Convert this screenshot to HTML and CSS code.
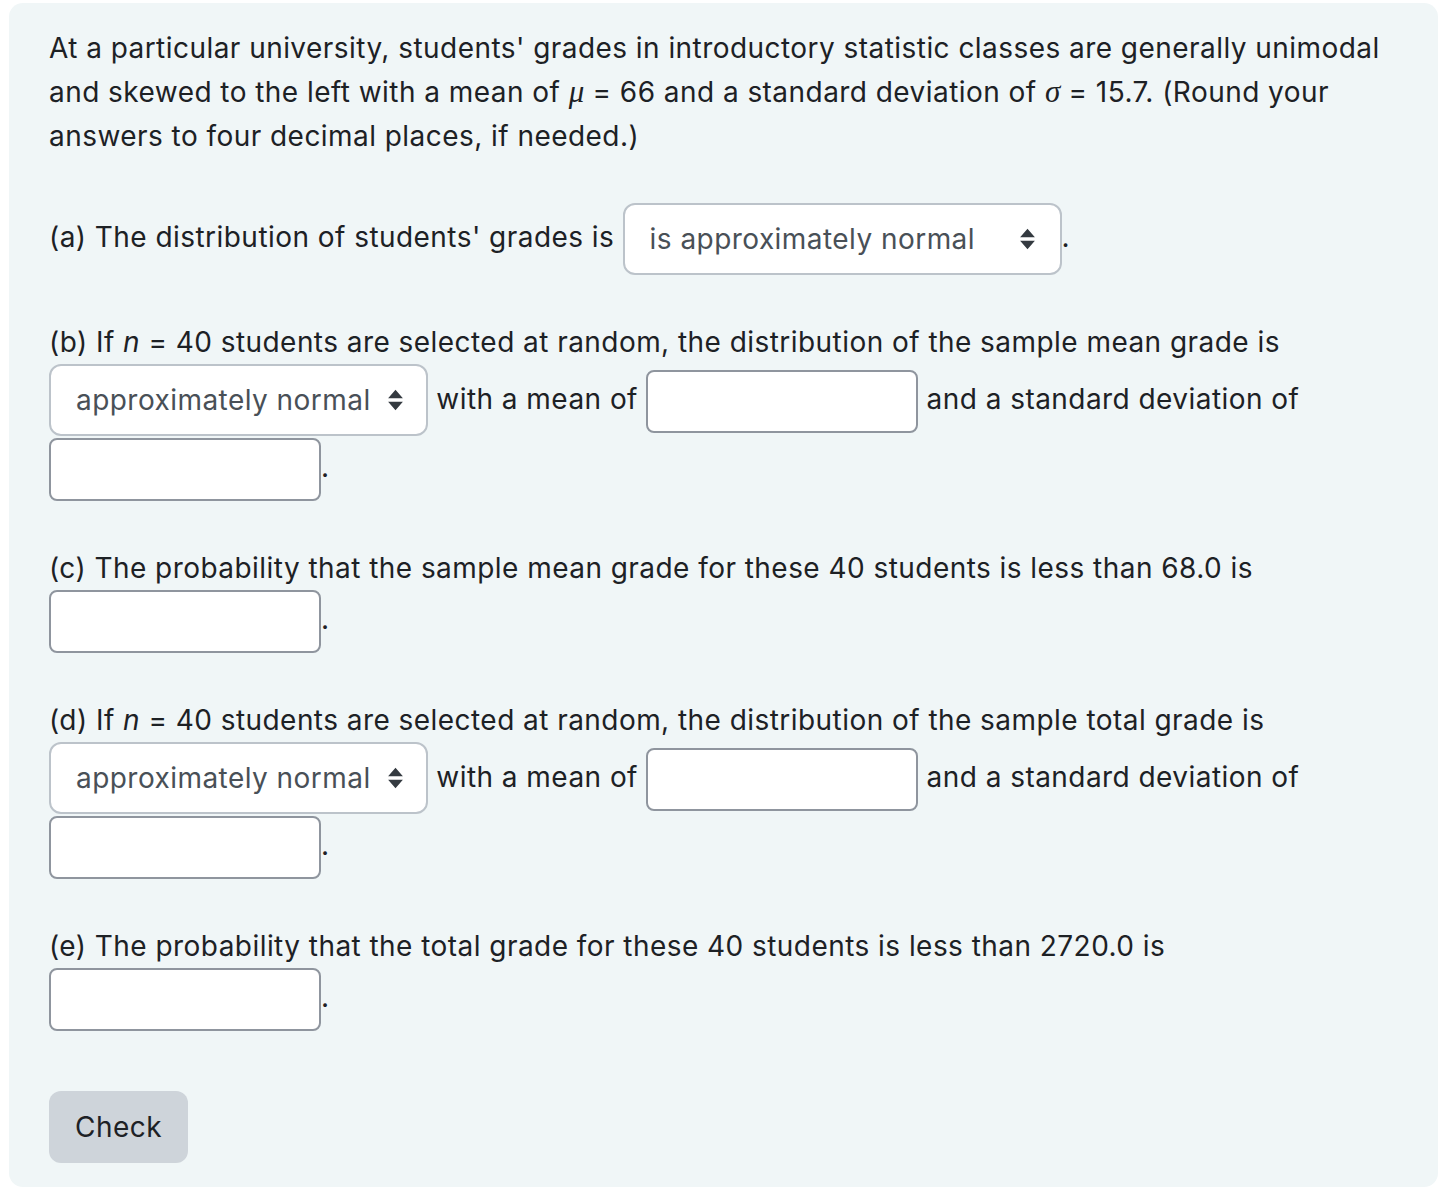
FILE: index.html
```html
<!DOCTYPE html>
<html>
<head>
<meta charset="utf-8">
<link rel="stylesheet" href="styles.css">
</head>
<body>
<div class="panel">
  <p class="para">At a particular university, students' grades in introductory statistic classes are generally unimodal and skewed to the left with a mean of <span class="math">μ</span> = 66 and a standard deviation of <span class="math">σ</span> = 15.7. (Round your answers to four decimal places, if needed.)</p>

  <p class="para">(a) The distribution of students' grades is <span class="select select-wide"><span class="select-text">is approximately normal</span><svg class="arrows" viewBox="0 0 18 26" width="18" height="26"><path d="M9 2 L17 11 H1 Z M1 15 H17 L9 24 Z" fill="#343a40"/></svg></span>.</p>

  <p class="para">(b) If <i>n</i> = 40 students are selected at random, the distribution of the sample mean grade is <span class="select"><span class="select-text">approximately normal</span><svg class="arrows" viewBox="0 0 18 26" width="18" height="26"><path d="M9 2 L17 11 H1 Z M1 15 H17 L9 24 Z" fill="#343a40"/></svg></span> with a mean of <span class="input"></span> and a standard deviation of <span class="input"></span>.</p>

  <p class="para">(c) The probability that the sample mean grade for these 40 students is less than 68.0 is <span class="input"></span>.</p>

  <p class="para">(d) If <i>n</i> = 40 students are selected at random, the distribution of the sample total grade is <span class="select"><span class="select-text">approximately normal</span><svg class="arrows" viewBox="0 0 18 26" width="18" height="26"><path d="M9 2 L17 11 H1 Z M1 15 H17 L9 24 Z" fill="#343a40"/></svg></span> with a mean of <span class="input"></span> and a standard deviation of <span class="input"></span>.</p>

  <p class="para">(e) The probability that the total grade for these 40 students is less than 2720.0 is <span class="input"></span>.</p>

  <div class="actions"><button class="check">Check</button></div>
</div>
</body>
</html>
```
FILE: styles.css
```css
html, body {
  margin: 0;
  padding: 0;
  background: #ffffff;
}
body {
  padding: 3px 4px 10px 9px;
  font-family: Inter, "Noto Sans", "Liberation Sans", sans-serif;
  font-size: 28px;
  line-height: 44px;
  letter-spacing: 0.45px;
  color: #1d2125;
}
.panel {
  background: #f0f6f7;
  border-radius: 14px;
  padding: 23px 40px 24px 40px;
  width: 1349px;
}
.para {
  margin: 0 0 45px 0;
}
.math {
  font-family: "Liberation Serif", "DejaVu Serif", serif;
  font-style: italic;
  font-size: 31px;
  letter-spacing: 0;
}
i {
  font-style: italic;
}
.select {
  display: inline-flex;
  align-items: center;
  justify-content: space-between;
  box-sizing: border-box;
  height: 72px;
  width: 379px;
  padding: 0 22px 0 25px;
  margin: 0 0 2px 0;
  border: 2px solid #bcc3ca;
  border-radius: 12px;
  background: #ffffff;
  color: #495057;
  vertical-align: middle;
}
.select-wide {
  width: 439px;
  padding-right: 24px;
  margin-bottom: 0;
}
.arrows {
  display: block;
  width: 17px;
  height: 24px;
}
.input {
  display: inline-block;
  box-sizing: border-box;
  width: 272px;
  height: 63px;
  margin: 0;
  border: 2px solid #8f959e;
  border-radius: 8px;
  background: #ffffff;
  vertical-align: middle;
}
.para:last-of-type {
  margin-bottom: 0;
}
.actions {
  margin-top: 60px;
}
.check {
  font-family: inherit;
  font-size: 28px;
  line-height: 44px;
  letter-spacing: 0.45px;
  color: #1d2125;
  background: #ced4da;
  border: none;
  border-radius: 12px;
  width: 139px;
  height: 72px;
  padding: 0;
  margin: 0;
  display: block;
}
```
